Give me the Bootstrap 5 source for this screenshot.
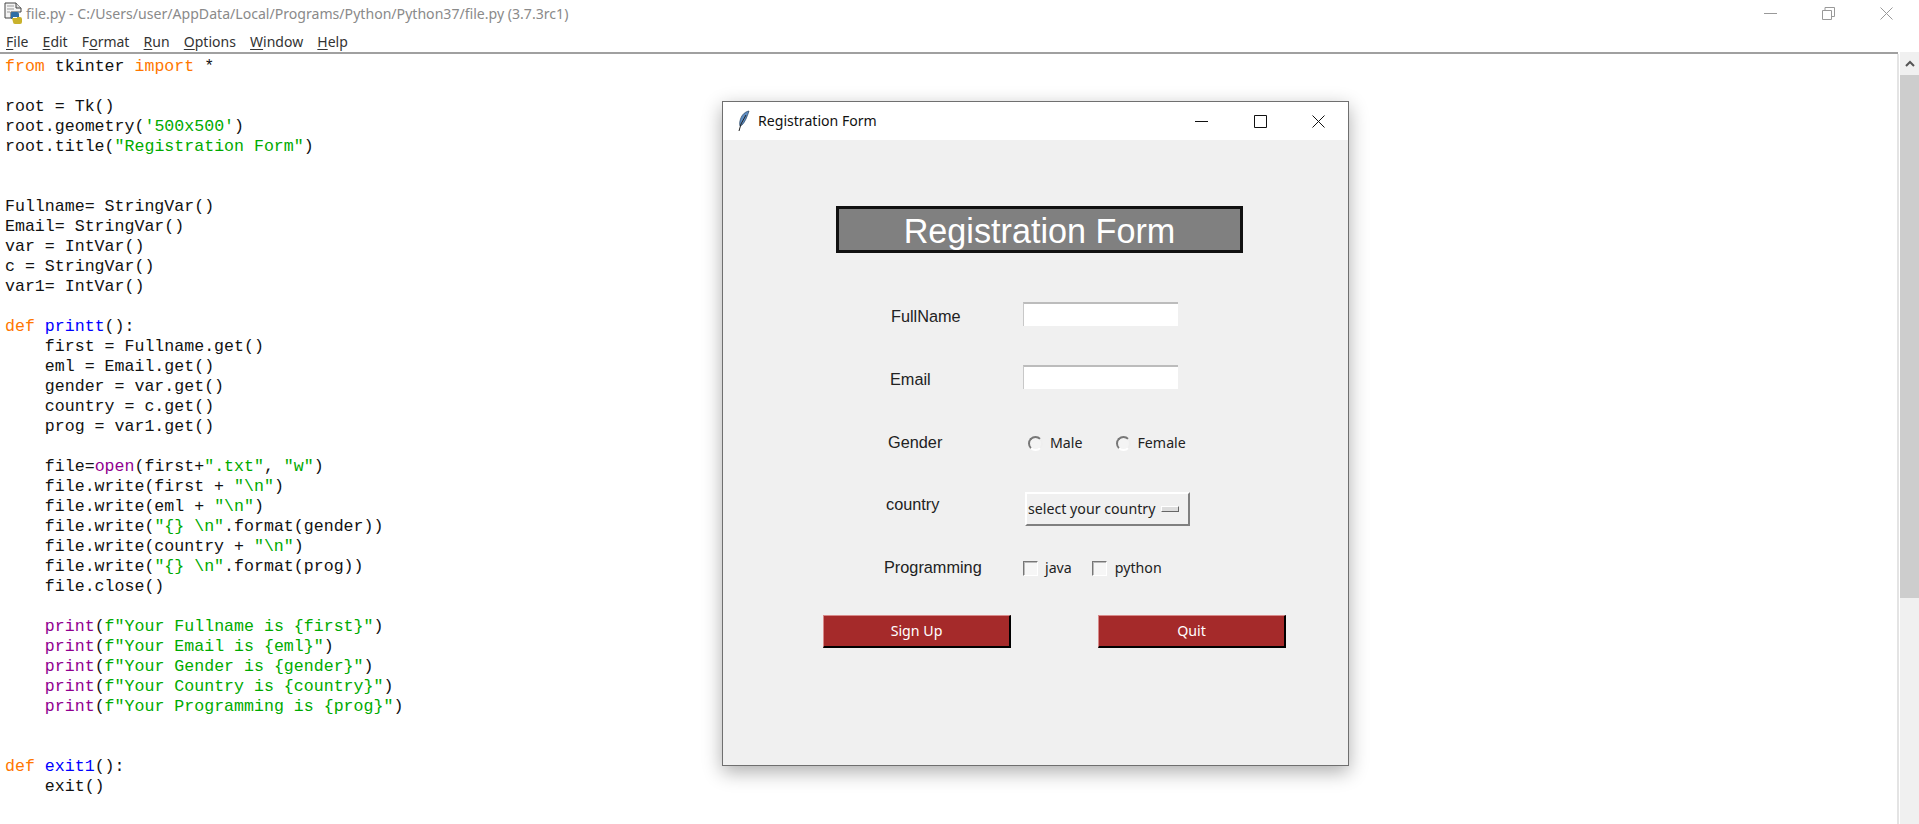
<!DOCTYPE html>
<html lang="en">
<head>
<meta charset="utf-8">
<title>file.py</title>
<link href="https://cdn.jsdelivr.net/npm/bootstrap@5.3.0/dist/css/bootstrap.min.css" rel="stylesheet">
<style>
html,body{height:100%;overflow:hidden;background:#fff}
.ide{height:824px}
.ide-title{height:27px;padding-left:3px;font:14.1px/27px "Noto Sans",sans-serif;color:#8a8a8a}
.ide-title svg.py{margin-right:1px}
.win-ctl{width:155px;padding-right:26px;flex:none}
.win-ctl svg{display:block}
.ide-menu{height:27px;padding-left:6px;gap:14.2px;font:14px/29px "Noto Sans",sans-serif;color:#333;border-bottom:2px solid #a0a0a0;margin-right:21px}
.ide-menu u{text-underline-offset:2px}
.ide-main{height:770px}
.code{margin:0;padding:3px 0 0 5px;font:16.6px/20px "Liberation Mono",monospace;color:#111;overflow:hidden;border-right:2px solid #e4e4e4}
.k{color:#ff7700}.d{color:#0000ff}.s{color:#00aa00}.b{color:#900090}
.sbar{width:19px;background:#f0f0f0;margin-left:1px;margin-top:-2px}
.sbar-arrow{height:23px}
.sbar-thumb{height:523px;background:#cdcdcd}
.tkwin{position:absolute;left:722px;top:101px;width:627px;height:665px;background:#f0f0f0;border:1px solid #6f6f6f;box-shadow:0 6px 18px rgba(0,0,0,.32)}
.tk-bar{height:38px;background:#fff;padding-left:13px;font:14.1px/38px "Noto Sans",sans-serif;color:#111}
.tk-bar svg.fe{margin-right:6px}
.tk-ctl{padding-right:23px;gap:45.5px}
.tk-head{margin:66px 0 0 113px;width:407px;height:47px;background:#808080;border:3px solid #111;color:#fff;font:34.2px/44px "Liberation Sans",sans-serif;text-align:center}
.fr{height:26px}
.fr1{margin-top:49px}.fr2{margin-top:37px}.fr3{margin-top:39px}.fr4{margin-top:36px;height:34px}.fr5{margin-top:29px}.fr6{margin-top:34px;height:33px}
.lb{width:300px;font:16.3px/20px "Liberation Sans",sans-serif;color:#222}
.lb1{padding-left:168px;padding-top:1px}.lb2{padding-left:167px;padding-top:2px}.lb3{padding-left:165px;padding-bottom:2px}.lb4{padding-left:163px;padding-bottom:11px}.lb5{padding-left:161px;padding-bottom:2px}
.tin{display:block;width:155px;height:24px;background:#fff;border:0;border-top:2px solid #bcbcbc;border-left:1px solid #c8c8c8;padding:0;margin-bottom:2px}
.opt-t{font:14.2px/22px "Noto Sans",sans-serif;color:#222}
.rd{width:15px;height:15px;border-radius:50%;border:2px solid;border-color:#777 #eee #fff #777;background:#f4f4f4;flex:none}
.cb{width:15px;height:15px;border:1px solid;border-color:#777 #fff #fff #777;box-shadow:inset 1px 1px 0 #bbb;background:#f6f6f6;flex:none}
.g1{margin-left:5px}.g2{margin-left:7px}.g3{margin-left:33px}.g4{margin-left:7px}
.g5{margin-left:7px}.g6{margin-left:20px}.g7{margin-left:8px}
.omenu{margin-left:2px;width:165px;height:34px;border:2px solid;border-color:#fff #808080 #808080 #fff;background:#f0f0f0;padding-left:1px;padding-top:1px;font:14.2px/28px "Noto Sans",sans-serif;color:#222;white-space:nowrap}
.oind{display:inline-block;width:18px;height:6px;margin-left:6px;border:1px solid;border-color:#fff #666 #666 #fff;background:#ddd;vertical-align:2px}
.act{width:188px;height:33px;margin:0;padding:0;border:1px solid;border-color:#d88a8a #000 #000 #d88a8a;border-width:1px 2px 2px 1px;background:#a52a2a;color:#fff;border-radius:0;font:14.2px/28px "Noto Sans",sans-serif}
.act:hover{background:#a52a2a;color:#fff;border-color:#d88a8a #000 #000 #d88a8a}
.act1{margin-left:100px}.act2{margin-left:87px}
</style>
</head>
<body>
<div class="ide d-flex flex-column">
  <div class="ide-title d-flex align-items-center">
    <svg class="py" width="22" height="23" viewBox="0 0 22 23"><path d="M2 1h11l5 5v4H8v6H2z" fill="#f4f4f4" stroke="#444"/><path d="M13 1v5h5" fill="#ddd" stroke="#444"/><path d="M4 4h7M4 7h7M4 10h3" stroke="#999"/><path d="M9 10h5a2 2 0 0 1 2 2v3h-6v2h-2v-5a2 2 0 0 1 1-2z" fill="#2f6ea5"/><path d="M9 16h5v-1h3a2 2 0 0 1 2 2v3a2 2 0 0 1-2 2h-5a2 2 0 0 1-2-2z" fill="#c9b22c"/></svg>
    <span class="flex-grow-1">file.py - C:/Users/user/AppData/Local/Programs/Python/Python37/file.py (3.7.3rc1)</span>
    <div class="win-ctl d-flex justify-content-between align-items-center">
      <svg width="13" height="13" viewBox="0 0 13 13"><path d="M0 6.500h13" stroke="#999"/></svg>
      <svg width="13" height="13" viewBox="0 0 13 13" fill="none" stroke="#999"><path d="M.5 3.500h9v9h-9zM3 3.500V.5h9.500v9h-3"/></svg>
      <svg width="13" height="13" viewBox="0 0 13 13" stroke="#999"><path d="M.5.5l12 12M12.500.5l-12 12"/></svg>
    </div>
  </div>
  <div class="ide-menu d-flex">
    <span><u>F</u>ile</span><span><u>E</u>dit</span><span>F<u>o</u>rmat</span><span><u>R</u>un</span><span><u>O</u>ptions</span><span><u>W</u>indow</span><span><u>H</u>elp</span>
  </div>
  <div class="ide-main d-flex">
<pre class="code flex-grow-1"><span class="k">from</span> tkinter <span class="k">import</span> *

root = Tk()
root.geometry(<span class="s">'500x500'</span>)
root.title(<span class="s">"Registration Form"</span>)


Fullname= StringVar()
Email= StringVar()
var = IntVar()
c = StringVar()
var1= IntVar()

<span class="k">def</span> <span class="d">printt</span>():
    first = Fullname.get()
    eml = Email.get()
    gender = var.get()
    country = c.get()
    prog = var1.get()

    file=<span class="b">open</span>(first+<span class="s">".txt"</span>, <span class="s">"w"</span>)
    file.write(first + <span class="s">"\n"</span>)
    file.write(eml + <span class="s">"\n"</span>)
    file.write(<span class="s">"{} \n"</span>.format(gender))
    file.write(country + <span class="s">"\n"</span>)
    file.write(<span class="s">"{} \n"</span>.format(prog))
    file.close()

    <span class="b">print</span>(<span class="s">f"Your Fullname is {first}"</span>)
    <span class="b">print</span>(<span class="s">f"Your Email is {eml}"</span>)
    <span class="b">print</span>(<span class="s">f"Your Gender is {gender}"</span>)
    <span class="b">print</span>(<span class="s">f"Your Country is {country}"</span>)
    <span class="b">print</span>(<span class="s">f"Your Programming is {prog}"</span>)


<span class="k">def</span> <span class="d">exit1</span>():
    exit()</pre>
    <div class="sbar d-flex flex-column">
      <div class="sbar-arrow d-flex align-items-center justify-content-center"><svg width="10" height="7" viewBox="0 0 10 7"><path d="M1 6l4-4 4 4" fill="none" stroke="#555" stroke-width="2"/></svg></div>
      <div class="sbar-thumb"></div>
    </div>
  </div>
</div>

<div class="tkwin">
  <div class="tk-bar d-flex align-items-center">
    <svg class="fe" width="16" height="22" viewBox="0 0 16 22"><path d="M13 1C8 2 5 6 4 11c-.5 2-.5 3 0 5l2-1c3-3 5-8 7-14z" fill="#5d8cc2" stroke="#25415f" stroke-width=".7"/><path d="M10 5L5 14 3 21" fill="none" stroke="#222"/></svg>
    <span class="flex-grow-1">Registration Form</span>
    <div class="tk-ctl d-flex align-items-center">
      <svg width="13" height="13" viewBox="0 0 13 13"><path d="M0 6.500h13" stroke="#111"/></svg>
      <svg width="13" height="13" viewBox="0 0 13 13"><path d="M.5.5h12v12H.5z" fill="none" stroke="#111"/></svg>
      <svg width="13" height="13" viewBox="0 0 13 13"><path d="M.5.5l12 12M12.500.5l-12 12" stroke="#111"/></svg>
    </div>
  </div>
  <div class="tk-head">Registration Form</div>
  <div class="fr fr1 d-flex align-items-center"><div class="lb lb1">FullName</div><input class="tin" type="text" aria-label="FullName"></div>
  <div class="fr fr2 d-flex align-items-center"><div class="lb lb2">Email</div><input class="tin" type="text" aria-label="Email"></div>
  <div class="fr fr3 d-flex align-items-center"><div class="lb lb3">Gender</div><span class="rd g1"></span><span class="opt-t g2">Male</span><span class="rd g3"></span><span class="opt-t g4">Female</span></div>
  <div class="fr fr4 d-flex align-items-center"><div class="lb lb4">country</div><div class="omenu">select your country<span class="oind"></span></div></div>
  <div class="fr fr5 d-flex align-items-center"><div class="lb lb5">Programming</div><span class="cb"></span><span class="opt-t g5">java</span><span class="cb g6"></span><span class="opt-t g7">python</span></div>
  <div class="fr fr6 d-flex"><button type="button" class="btn act act1">Sign Up</button><button type="button" class="btn act act2">Quit</button></div>
</div>
<script src="https://cdn.jsdelivr.net/npm/bootstrap@5.3.0/dist/js/bootstrap.bundle.min.js"></script>
</body>
</html>
